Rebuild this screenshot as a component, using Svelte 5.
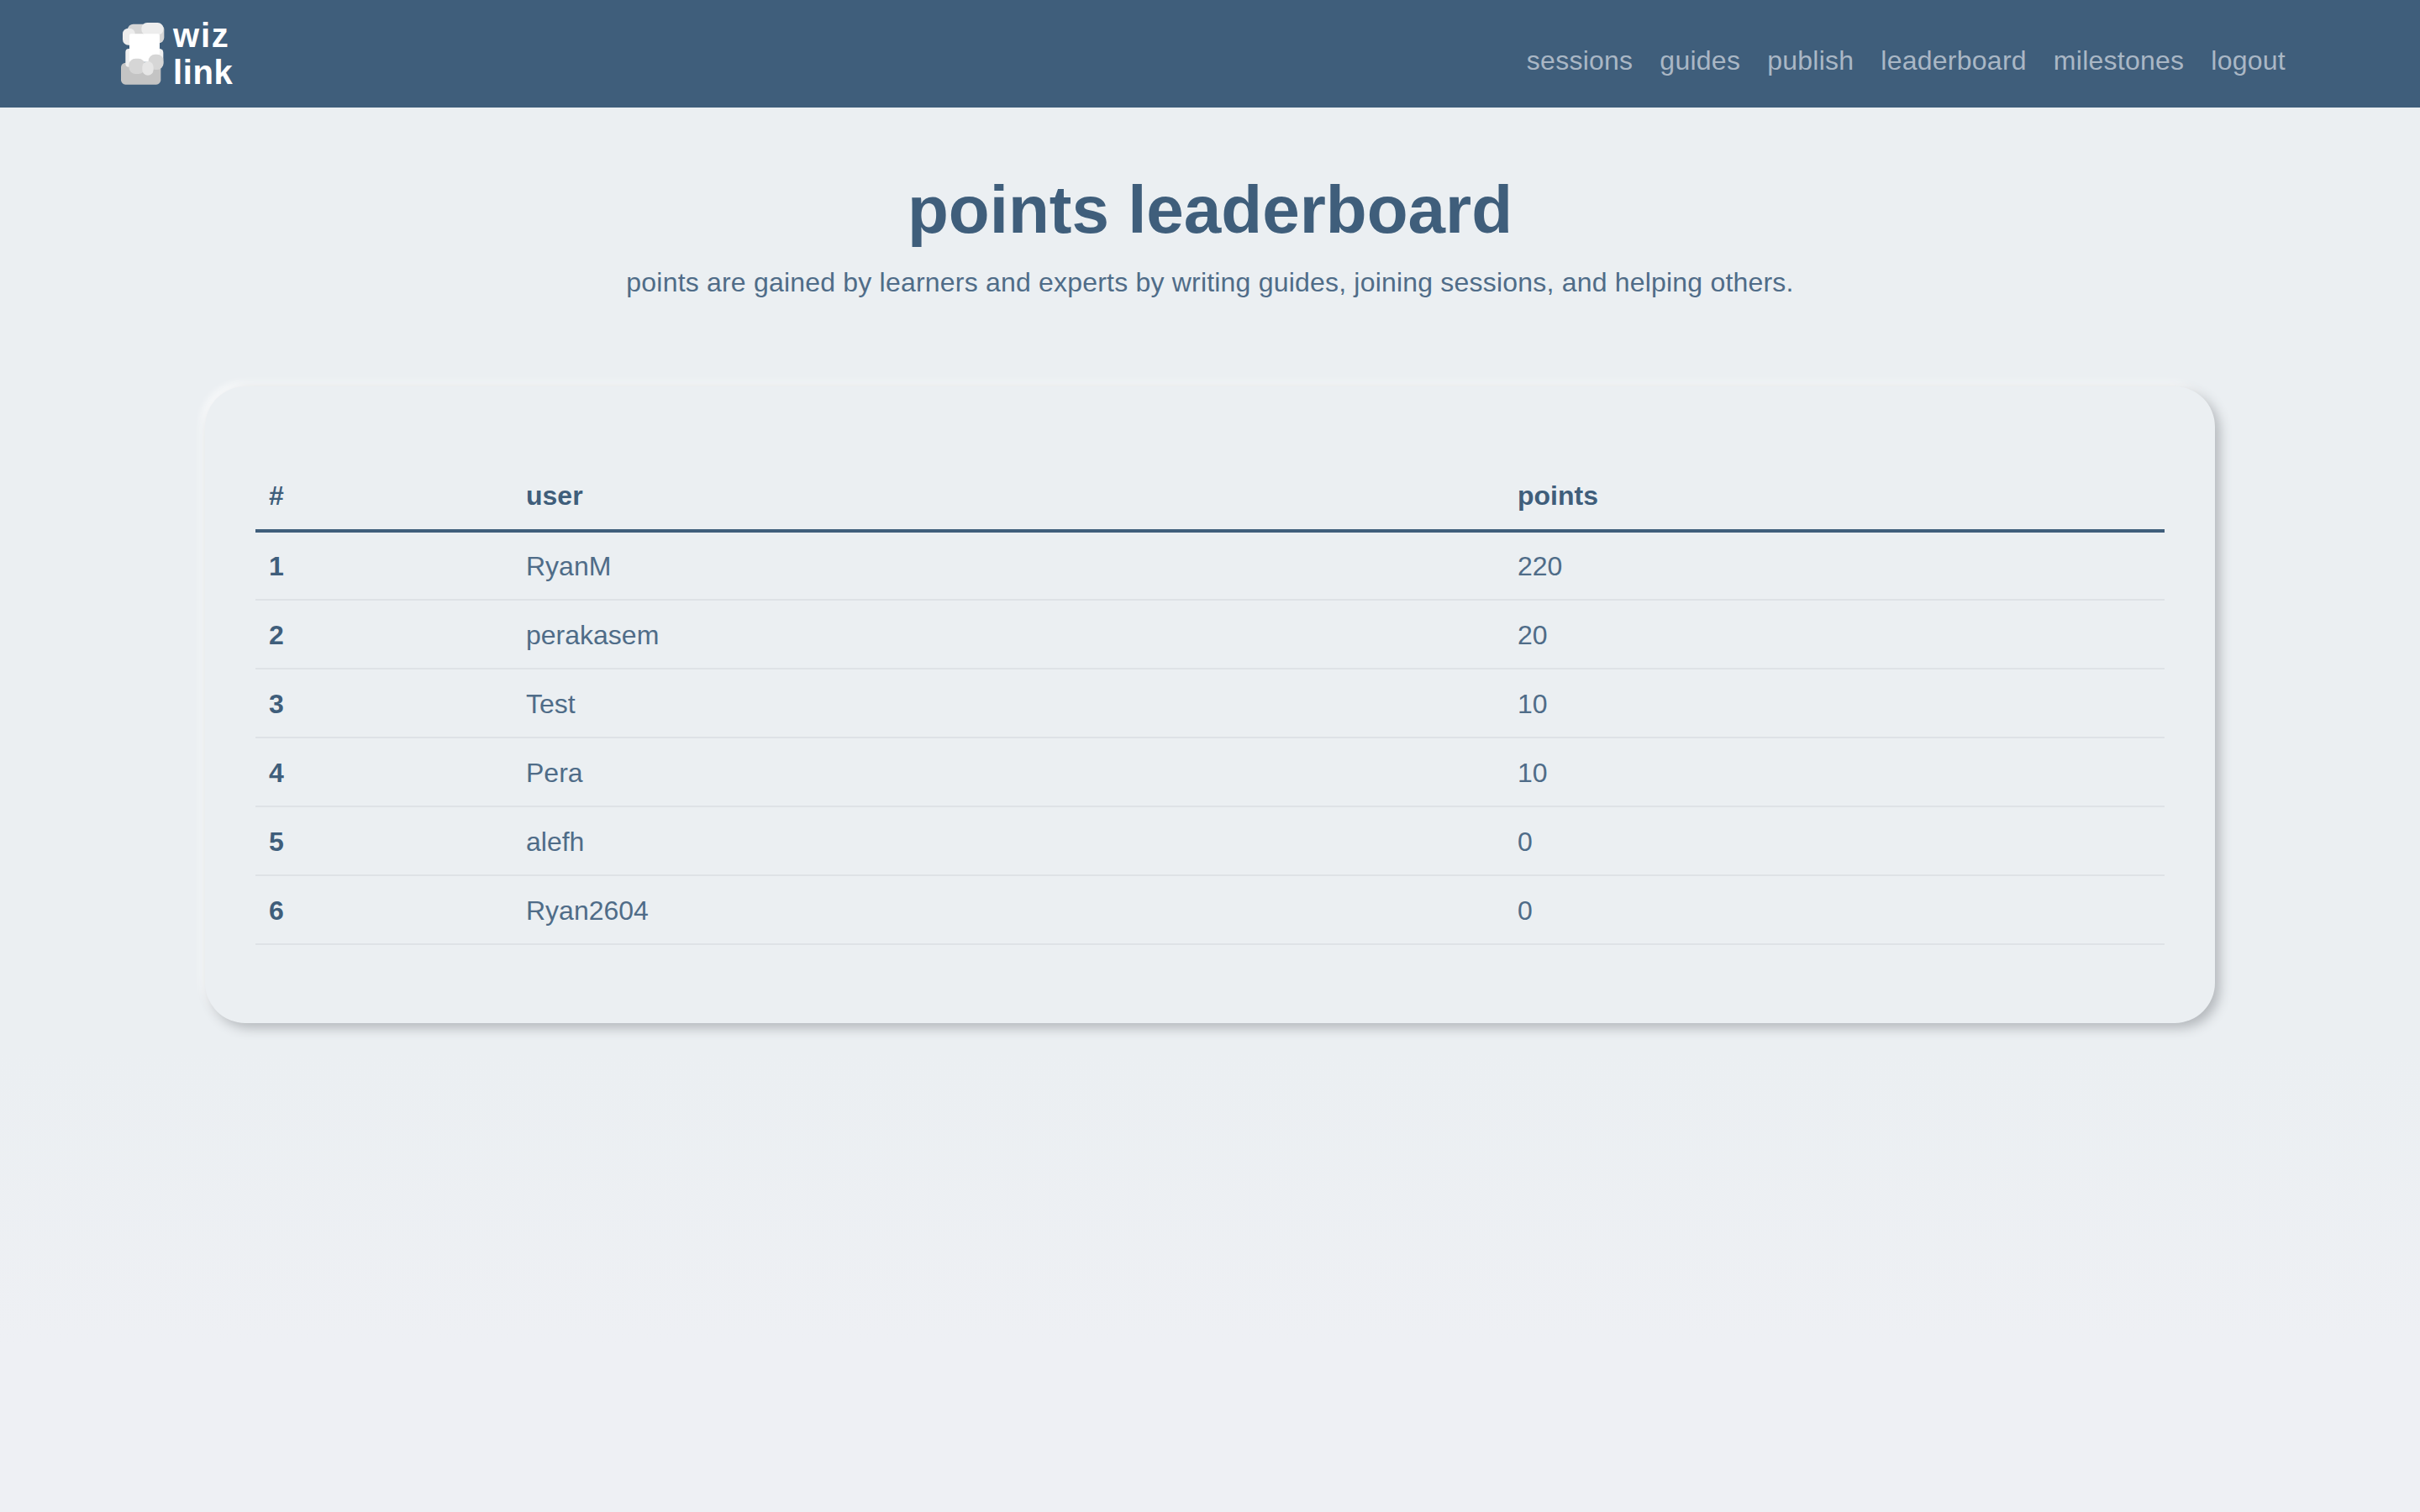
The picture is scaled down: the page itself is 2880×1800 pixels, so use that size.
<script>
  const rows = [
    ['1', 'RyanM', '220'],
    ['2', 'perakasem', '20'],
    ['3', 'Test', '10'],
    ['4', 'Pera', '10'],
    ['5', 'alefh', '0'],
    ['6', 'Ryan2604', '0']
  ];
  const links = ['sessions', 'guides', 'publish', 'leaderboard', 'milestones', 'logout'];
</script>

<div class="page">
  <nav class="navbar">
    <a class="brand" href="#top">
      <svg class="logo" width="52" height="74" viewBox="24 22 156 222" aria-hidden="true">
        <rect x="24" y="165" width="142" height="78" rx="16" fill="#c4c4c4" />
        <rect x="48" y="27" width="130" height="68" rx="20" fill="#d6d6d6" />
        <rect x="30" y="42" width="44" height="60" rx="20" fill="#ededed" />
        <rect x="97" y="22" width="78" height="44" rx="20" fill="#ededed" />
        <rect x="40" y="115" width="30" height="65" rx="12" fill="#f0f0f0" />
        <rect x="140" y="115" width="35" height="50" rx="14" fill="#f0f0f0" />
        <rect x="54" y="62" width="108" height="100" rx="6" fill="#ffffff" />
        <rect x="52" y="150" width="58" height="55" rx="24" fill="#d6d6d6" />
        <rect x="122" y="135" width="54" height="55" rx="24" fill="#d6d6d6" />
        <rect x="100" y="160" width="40" height="50" rx="20" fill="#e6e6e6" />
      </svg>
      <span class="brand-text"><span class="wiz">wiz</span><span class="link">link</span></span>
    </a>
    <ul class="nav-links">
      {#each links as link}
        <li><a href="#top">{link}</a></li>
      {/each}
    </ul>
  </nav>

  <main>
    <header class="intro">
      <h1>points leaderboard</h1>
      <p>points are gained by learners and experts by writing guides, joining sessions, and helping others.</p>
    </header>

    <section class="card">
      <table>
        <colgroup>
          <col class="c1" />
          <col class="c2" />
          <col />
        </colgroup>
        <thead>
          <tr><th>#</th><th>user</th><th>points</th></tr>
        </thead>
        <tbody>
          {#each rows as r}
            <tr>
              <th>{r[0]}</th>
              <td>{r[1]}</td>
              <td>{r[2]}</td>
            </tr>
          {/each}
        </tbody>
      </table>
    </section>
  </main>
</div>

<style>
  :global(body) {
    margin: 0;
    background: #eef0f4;
  }
  .page {
    min-height: 1800px;
    font-family: "Liberation Sans", Arial, sans-serif;
    color: #3f5e7b;
    background: linear-gradient(#ebeff2 1250px, #eef0f4 1600px);
  }
  .navbar {
    height: 128px;
    box-sizing: border-box;
    padding: 0 160px 0 144px;
    background: #3f5e7b;
    display: flex;
    align-items: center;
    justify-content: space-between;
  }
  .brand {
    display: flex;
    align-items: center;
    gap: 10px;
    text-decoration: none;
    color: #fff;
  }
  .logo {
    display: block;
  }
  .brand-text {
    font-size: 40px;
    font-weight: 700;
    line-height: 44px;
  }
  .wiz,
  .link {
    display: block;
  }
  .wiz {
    letter-spacing: 1.8px;
  }
  .link {
    letter-spacing: 0.6px;
  }
  .nav-links {
    list-style: none;
    margin: 16px 0 0;
    padding: 0;
    display: flex;
    gap: 32px;
  }
  .nav-links a {
    font-size: 32px;
    line-height: 40px;
    letter-spacing: 0.25px;
    color: #aab7c5;
    text-decoration: none;
  }
  .intro {
    text-align: center;
    padding-top: 80px;
  }
  h1 {
    margin: 0;
    font-size: 80px;
    line-height: 84px;
    font-weight: 700;
  }
  .intro p {
    margin: 24px 0 0;
    font-size: 32px;
    line-height: 40px;
    letter-spacing: 0.2px;
    color: #4f6c88;
  }
  .card {
    box-sizing: border-box;
    width: 2392px;
    margin: 104px auto 0;
    padding: 88px 60px 93px;
    border-radius: 48px;
    background: #ebeff2;
    box-shadow: 6px 6px 14px #b4b8bc, -4px -4px 10px rgba(255, 255, 255, 0.8);
  }
  table {
    width: 100%;
    table-layout: fixed;
    border-collapse: collapse;
    font-size: 32px;
  }
  .c1 {
    width: 306px;
  }
  .c2 {
    width: 1180px;
  }
  th,
  td {
    text-align: left;
    padding: 2px 16px 0;
    height: 82px;
    box-sizing: border-box;
    border-bottom: 2px solid #dee2e6;
  }
  thead th {
    height: 84px;
    border-bottom: 4px solid #3f5e7b;
  }
  td {
    color: #4f6c88;
  }
</style>
